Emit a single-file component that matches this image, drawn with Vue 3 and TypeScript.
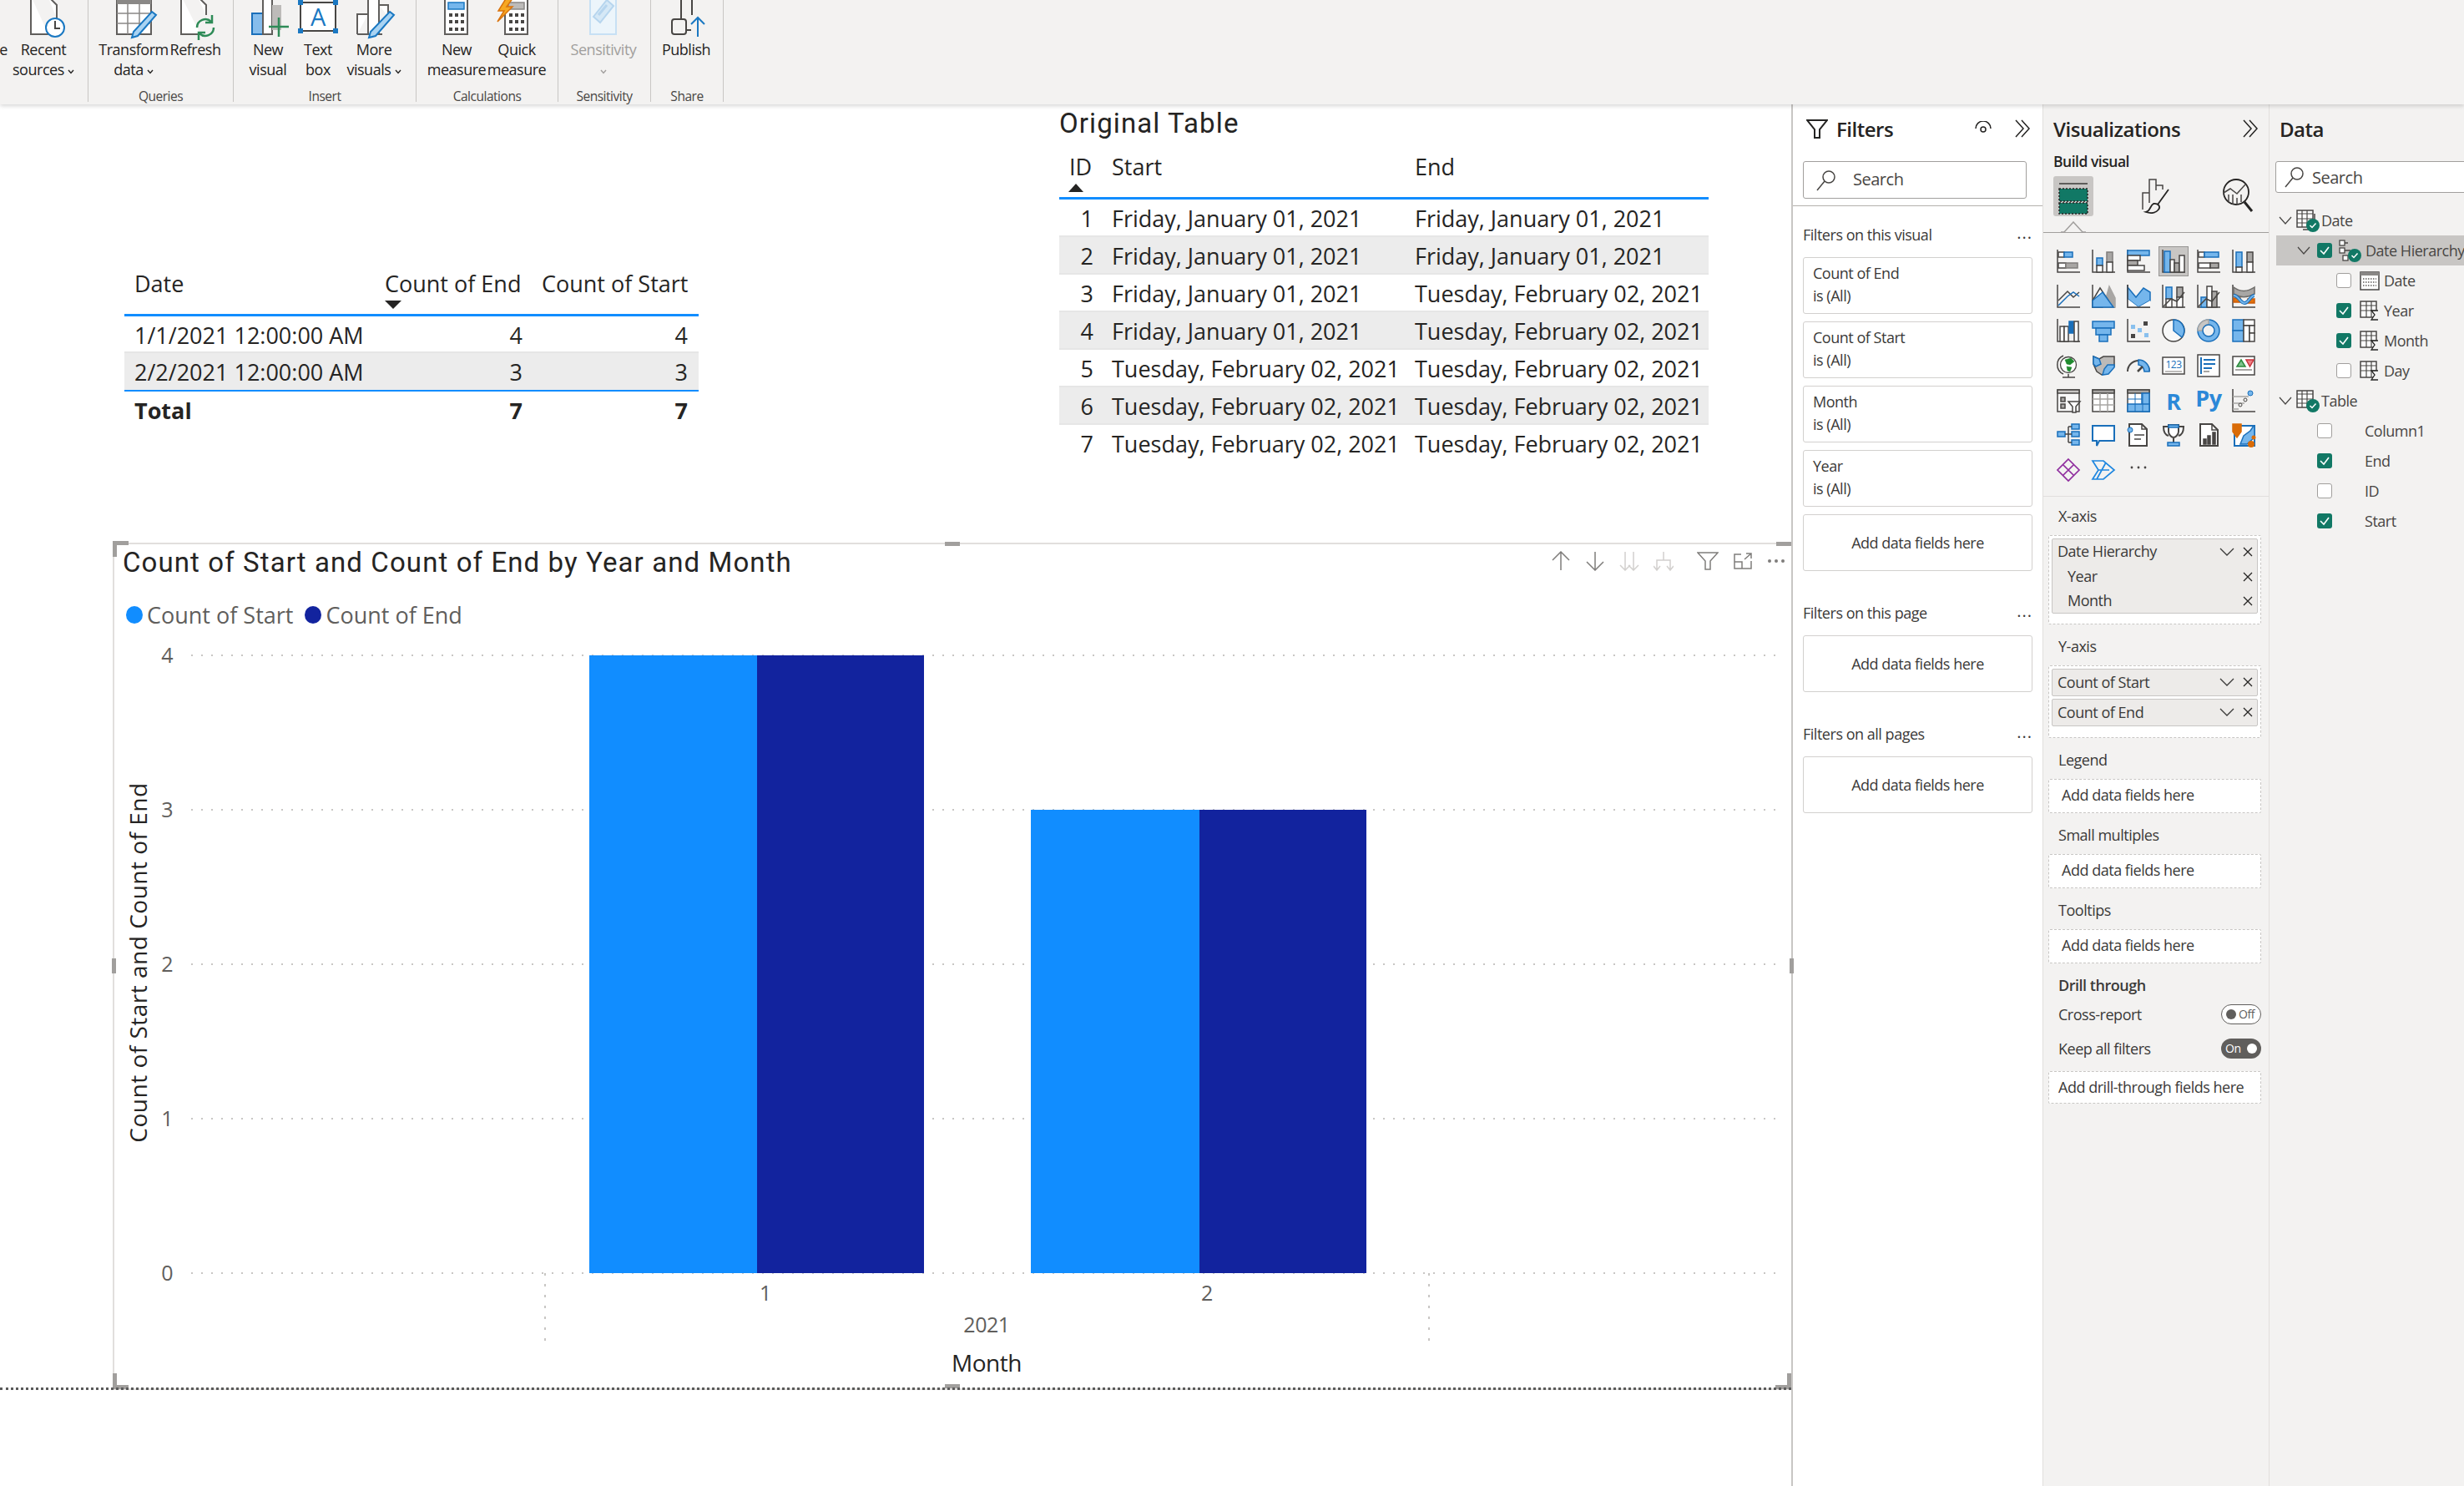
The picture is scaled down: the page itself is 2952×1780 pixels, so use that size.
<script setup lang="ts">
const D = "#484644";
const B = "#1a6fba";
const L = "#75b6ec";
const G = "#a8a6a4";
const W = "#ffffff";
const P = "#f3f2f1";

function r(x: number, y: number, w: number, h: number, f = W, s = D) {
    return `<rect x="${x}" y="${y}" width="${w}" height="${h}" fill="${f}" stroke="${s}" stroke-width="1.5"/>`;
}
function p(d: string, f = "none", s = D, w = 1.5) {
    return `<path d="${d}" fill="${f}" stroke="${s}" stroke-width="${w}"/>`;
}
const ax = p("M1 0V27H28");
const cell = (x: number, y: number, f: string) => `<rect x="${x}" y="${y}" width="5" height="5" fill="${f}"/>`;

const vizIcons: string[] = [
    ax + r(2, 3, 7, 6) + r(9, 3, 10, 6, L, B) + r(2, 16, 9, 6) + r(11, 16, 14, 6, G, "#807e7c"),
    ax + r(6, 10, 7, 9, L, B) + r(6, 19, 7, 8) + r(18, 3, 7, 12, G, "#807e7c") + r(18, 15, 7, 12),
    ax + r(1, 1, 26, 6, L, B) + r(1, 7, 15, 6) + r(1, 13, 12, 6, G) + r(1, 19, 20, 6),
    ax + r(3, 2, 7, 25, L, B) + r(10, 12, 5, 15) + r(15, 16, 6, 11, G) + r(21, 7, 6, 20),
    ax + r(2, 3, 7, 6) + r(9, 3, 17, 6, L, B) + r(2, 16, 14, 6) + r(16, 16, 10, 6, G),
    ax + r(5, 3, 7, 18, L, B) + r(5, 21, 7, 6) + r(18, 3, 7, 12, G) + r(18, 15, 7, 12),
    ax + p("M2 19L13 8L20 15L27 9") + p("M2 25L13 14L20 9L27 14", "none", B),
    ax + p("M14 27L21 2L28 16V27Z", G, G) + p("M1 19L10 4L20 19L13 27H1Z", W) + p("M1 27V19L13 9L26 27Z", L, B),
    ax + p("M1 3L11 15L20 4L28 9V19L14 27L1 17Z", L, B) + p("M1 17L14 27H1ZM28 19L14 27H28Z", W, W, 0) + ax,
    ax + r(5, 3, 7, 14, L, B) + r(5, 17, 7, 10) + r(18, 3, 7, 12, G) + r(18, 15, 7, 12) + p("M2 26L11 17L18 20L27 9"),
    ax + r(5, 15, 7, 12, L, B) + r(12, 2, 6, 25) + r(18, 8, 6, 19, G) + p("M2 26L11 17L18 20L27 9"),
    ax + p("M2 3C10 9 18 9 27 3V11C18 16 10 16 2 11Z", G, "#6d6b69") + r(2, 16, 8, 5, "#e3710b", "#ca5b0a") + r(19, 17, 8, 5, "#e3710b", "#ca5b0a") + p("M2 13C8 13 10 22 15 22C20 22 22 13 27 13", "none", B, 4) + p("M2 13C8 13 10 22 15 22C20 22 22 13 27 13", "none", L, 2),
    ax + r(4, 9, 5, 18) + r(9, 9, 5, 18) + r(15, 3, 5, 14, B, B) + r(21, 3, 5, 24),
    r(1, 3, 26, 8, L, B) + r(5, 11, 18, 8, L, B) + r(9, 19, 10, 8, L, B),
    ax + cell(20, 3, D) + cell(5, 7, "#89c0ee") + cell(13, 11, "#89c0ee") + cell(5, 18, D) + cell(21, 17, "#89c0ee"),
    `<circle cx="14" cy="14" r="13" fill="#f8f8f8" stroke="${D}" stroke-width="1.5"/>` + p("M14 14V1A13 13 0 0 1 24 22Z", L, B),
    `<circle cx="14" cy="14" r="13" fill="${L}" stroke="${B}" stroke-width="1.5"/>` + p("M14 1A13 13 0 0 0 1 14H7A7 7 0 0 1 14 7Z", "#c8c6c4", G) + `<circle cx="14" cy="14" r="7" fill="${P}" stroke="${B}" stroke-width="1.5"/>`,
    r(1, 1, 13, 13, L, B) + r(1, 14, 13, 13, L, B) + r(14, 1, 13, 7) + r(14, 8, 7, 19) + r(21, 8, 6, 9) + r(21, 17, 6, 10),
    `<circle cx="14" cy="13" r="9.5" fill="#fff" stroke="${D}" stroke-width="1.3"/>` + p("M8 2A12 12 0 0 0 8 24M7 28H22M14 24V28", "none", D) + p("M10 7L17 5L21 9L16 13L12 12ZM12 15L18 16L16 21L13 20Z", "#1f8a2e", "#1f8a2e", 0.5),
    p("M2 3L9 6L14 3H27V15L19 22L12 25L6 21L2 12Z", "#bcbab8", D) + p("M2 3L9 6L11 12L5 15L2 12Z", L, B) + p("M19 13H27V16L20 24L13 25L15 18Z", L, B),
    p("M1 21A13 13 0 0 1 27 21", "none", D, 2) + p("M14 7A13 13 0 0 1 27 21H21A8 8 0 0 0 14 13Z", L, B) + p("M13 21L19 15", "none", D, 2.5),
    r(1, 4, 26, 20) + `<text x="14" y="17" text-anchor="middle" font-size="12" fill="${B}" font-family="Open Sans, sans-serif">123</text>` + p("M4 21H24", "none", G),
    r(1, 1, 26, 26) + p("M5 4V24M8 7H22M8 12H22M8 17H18", "none", B, 2) + p("M8 21H15", "none", G, 2),
    r(1, 3, 26, 22) + p("M6 15L11 7L16 15Z", "#7fc48f", "#2d8a3e") + p("M17 7H26L21.5 15Z", "#ef7f85", "#c7333c") + p("M4 19H24", "none", G, 2),
    r(1, 1, 26, 26, "#f8f8f8") + r(1, 1, 26, 4, "#c8c6c4") + r(5, 10, 5, 5, G) + r(5, 18, 5, 5, G) + p("M14 15H28L23 21V28H19V21Z", W),
    r(1, 1, 26, 26) + r(1, 1, 26, 4, G) + p("M1 12H27M1 19H27M10 5V27M19 5V27", "none", G, 1.5),
    r(1, 1, 26, 26) + r(1, 1, 26, 4, G) + r(18, 5, 9, 22, L, B) + r(1, 18, 26, 9, L, B) + p("M1 12H18M10 5V27M19 5V27", "none", B, 1),
    `<text x="14" y="25" text-anchor="middle" font-size="27" font-weight="700" fill="#2b88d8" font-family="Open Sans, sans-serif">R</text>`,
    `<text x="14" y="21" text-anchor="middle" font-size="27" font-weight="700" fill="#2b88d8" font-family="Open Sans, sans-serif">Py</text>`,
    p("M1 0V27H28") + p("M1 9H20M1 17H15M1 24H8", "none", G) + `<circle cx="22" cy="5" r="3" fill="${L}" stroke="${B}"/><circle cx="16" cy="13" r="2" fill="${P}" stroke="${D}"/><circle cx="10" cy="19" r="2" fill="${P}" stroke="${D}"/>`,
    r(1, 10, 9, 6, L, B) + r(18, 1, 9, 6, L, B) + r(18, 10, 9, 6, L, B) + r(18, 20, 9, 6, L, B) + p("M10 13H18M14 4V23M14 4H18M14 23H18", "none", D),
    p("M1 3H27V21H9L6 27V21H1Z", W, B, 2),
    p("M3 1H18L24 7V27H3Z", W, D, 2) + p("M18 1V7H24M9 14H21M9 19H17", "none", D) + `<circle cx="4" cy="8" r="3" fill="${L}" stroke="${B}"/>`,
    p("M7 4H2C2 10 4 14 8 15M21 4H26C26 10 24 14 20 15M8 2H20V10C20 14 16 17 14 17C12 17 8 14 8 10ZM14 17V23", W, D, 2) + r(8, 2, 12, 3, L, B) + r(7, 23, 14, 4, L, B),
    p("M4 1H18L25 8V27H4Z", W, D, 2) + p("M18 1V8H25", "none", D) + r(8, 19, 3, 6, D) + r(13, 15, 3, 10, D) + r(19, 11, 3, 14, D),
    p("M3 3H27V27H3Z", W, B, 2) + p("M10 25L14 15L22 9L26 3H27V17L18 25Z", L, B) + p("M1 1H11V10L6 17L1 10Z", "#d96b07", "#d96b07") + `<circle cx="26" cy="17" r="2.5" fill="#d96b07"/><circle cx="23" cy="25" r="4" fill="#d96b07"/>`,
    p("M14 1L27 14L14 27L1 14ZM14 1L7.5 7.5L20.5 20.5M14 1L20.5 7.5L7.5 20.5", "none", "#8f2d9e", 1.7),
    p("M1 3H14L27 14L14 25H1L8 14ZM8 14L21 14M17 5L6 25", "none", "#1f87e0", 1.7),
    `<circle cx="6" cy="11" r="1.4" fill="${D}"/><circle cx="14" cy="11" r="1.4" fill="${D}"/><circle cx="22" cy="11" r="1.4" fill="${D}"/>`,
];
const selectedViz = 3;

const ribbon = [
    {
        label: "",
        width: 106,
        pad: 0,
        buttons: [
            { key: "none", lines: ["e"], w: 10, chevron: false, muted: false },
            { key: "recent", lines: ["Recent", "sources"], w: 84, chevron: true, muted: false },
        ],
    },
    {
        label: "Queries",
        width: 174,
        pad: 12,
        buttons: [
            { key: "transform", lines: ["Transform", "data"], w: 84, chevron: true, muted: false },
            { key: "refresh", lines: ["Refresh"], w: 64, chevron: false, muted: false },
        ],
    },
    {
        label: "Insert",
        width: 219,
        pad: 13,
        buttons: [
            { key: "newvisual", lines: ["New", "visual"], w: 56, chevron: false, muted: false },
            { key: "textbox", lines: ["Text", "box"], w: 64, chevron: false, muted: false },
            { key: "more", lines: ["More", "visuals"], w: 70, chevron: true, muted: false },
        ],
    },
    {
        label: "Calculations",
        width: 170,
        pad: 6,
        buttons: [
            { key: "measure", lines: ["New", "measure"], w: 84, chevron: false, muted: false },
            { key: "quick", lines: ["Quick", "measure"], w: 60, chevron: false, muted: false },
        ],
    },
    {
        label: "Sensitivity",
        width: 111,
        pad: 4,
        buttons: [{ key: "sens", lines: ["Sensitivity"], w: 100, chevron: true, muted: true }],
    },
    {
        label: "Share",
        width: 87,
        pad: 0,
        buttons: [{ key: "publish", lines: ["Publish"], w: 84, chevron: false, muted: false }],
    },
];

const summaryRows = [
    { date: "1/1/2021 12:00:00 AM", end: 4, start: 4 },
    { date: "2/2/2021 12:00:00 AM", end: 3, start: 3 },
];

const jan = "Friday, January 01, 2021";
const feb = "Tuesday, February 02, 2021";
const originalRows = [
    [1, jan, jan],
    [2, jan, jan],
    [3, jan, feb],
    [4, jan, feb],
    [5, feb, feb],
    [6, feb, feb],
    [7, feb, feb],
];

// plot coordinates, relative to the svg under the legend
const zeroY = 756;
const unit = 185;
const gridValues = [0, 1, 2, 3, 4];
const bars = [
    { x: 569, w: 201, v: 4, fill: "#118dff" },
    { x: 770, w: 200, v: 4, fill: "#12239e" },
    { x: 1098, w: 202, v: 3, fill: "#118dff" },
    { x: 1300, w: 200, v: 3, fill: "#12239e" },
];

const filterCards = ["Count of End", "Count of Start", "Month", "Year"];

const xAxisFields = ["Year", "Month"];
const yAxisFields = ["Count of Start", "Count of End"];
const emptyBuckets = ["Legend", "Small multiples", "Tooltips"];

const tree = [
    { kind: "top", icon: "stack", label: "Date", checked: false },
    { kind: "hier", icon: "hier", label: "Date Hierarchy", checked: true },
    { kind: "nested", icon: "cal", label: "Date", checked: false },
    { kind: "nested", icon: "sum", label: "Year", checked: true },
    { kind: "nested", icon: "sum", label: "Month", checked: true },
    { kind: "nested", icon: "sum", label: "Day", checked: false },
    { kind: "top", icon: "table", label: "Table", checked: false },
    { kind: "field", icon: "", label: "Column1", checked: false },
    { kind: "field", icon: "", label: "End", checked: true },
    { kind: "field", icon: "", label: "ID", checked: false },
    { kind: "field", icon: "", label: "Start", checked: true },
];
</script>

<template>
    <div class="app">
        <header class="ribbon">
            <section
                v-for="group in ribbon"
                :key="group.label"
                class="group"
                :style="{ width: group.width + 'px' }"
            >
                <div class="group-buttons" :style="{ paddingLeft: group.pad + 'px' }">
                    <div
                        v-for="btn in group.buttons"
                        :key="btn.key"
                        class="rb"
                        :class="{ muted: btn.muted }"
                        :style="{ width: btn.w + 'px' }"
                    >
                        <svg class="rb-icon" viewBox="0 0 48 44" width="48" height="44">
                            <template v-if="btn.key === 'recent'">
                                <path d="M9 -5V41H30M29 -5L40 6V22" fill="#fff" stroke="#605e5c" stroke-width="2" />
                                <circle cx="38" cy="33" r="11" fill="#fff" stroke="#1a78c2" stroke-width="2" />
                                <path d="M38 25V34H44" fill="none" stroke="#484644" stroke-width="2" />
                            </template>
                            <template v-else-if="btn.key === 'transform'">
                                <rect x="4" y="-6" width="41" height="47" fill="#fff" stroke="#605e5c" stroke-width="2" />
                                <rect x="4" y="-6" width="41" height="11" fill="#8a8886" />
                                <path d="M4 16H45M4 28H45M17 5V41M31 5V41" stroke="#8a8886" stroke-width="1.5" />
                                <path d="M46 14L51 18L29 43L22 45L24 38Z" fill="#a9d3f2" stroke="#1a78c2" stroke-width="2" />
                            </template>
                            <template v-else-if="btn.key === 'refresh'">
                                <path d="M7 -5V41H30M26 -5L37 6V18" fill="#fff" stroke="#605e5c" stroke-width="2" />
                                <path d="M26 33A10 10 0 0 1 43 26M46 33A10 10 0 0 1 29 40" fill="none" stroke="#2e8b57" stroke-width="2.5" />
                                <path d="M44 18V27H36M28 48V39H36" fill="none" stroke="#2e8b57" stroke-width="2.5" />
                            </template>
                            <template v-else-if="btn.key === 'newvisual'">
                                <rect x="5" y="16" width="13" height="25" fill="#86bdec" stroke="#1a6fba" stroke-width="2" />
                                <rect x="18" y="-4" width="11" height="45" fill="#fff" stroke="#605e5c" stroke-width="2" />
                                <rect x="29" y="6" width="11" height="30" fill="#bdbbb9" />
                                <path d="M37 21V44M25 32H49" stroke="#2e8b57" stroke-width="2.5" />
                            </template>
                            <template v-else-if="btn.key === 'textbox'">
                                <rect x="3" y="3" width="42" height="34" fill="#fff" stroke="#484644" stroke-width="2" />
                                <rect x="0" y="0" width="6" height="6" fill="#1a78c2" />
                                <rect x="42" y="0" width="6" height="6" fill="#1a78c2" />
                                <rect x="0" y="34" width="6" height="6" fill="#1a78c2" />
                                <rect x="42" y="34" width="6" height="6" fill="#1a78c2" />
                                <text x="24" y="31" text-anchor="middle" font-size="29" fill="#1a78c2" font-family="Open Sans, sans-serif">A</text>
                            </template>
                            <template v-else-if="btn.key === 'more'">
                                <path d="M4 41V17H17M17 41V-4H30V41M30 6H41V20M4 41H34" fill="#fff" stroke="#605e5c" stroke-width="2" />
                                <path d="M43 14L48 18L26 43L18 45L20 38Z" fill="#a9d3f2" stroke="#1a78c2" stroke-width="2" />
                            </template>
                            <template v-else-if="btn.key === 'measure' || btn.key === 'quick'">
                                <rect x="10" y="-4" width="27" height="45" fill="#fff" stroke="#605e5c" stroke-width="2" />
                                <rect x="14" y="3" width="19" height="8" :fill="btn.key === 'quick' ? '#bdbbb9' : '#75b6ec'" :stroke="btn.key === 'quick' ? '#8a8886' : '#1a78c2'" stroke-width="1.5" />
                                <path d="M15 18H33M15 26H33M15 35H33" stroke="#484644" stroke-width="4" stroke-dasharray="4 3" />
                                <path v-if="btn.key === 'quick'" d="M12 -3L2 13H9L1 26L19 8H12L20 -3Z" fill="#f7a823" stroke="#d9730d" stroke-width="1.5" />
                            </template>
                            <template v-else-if="btn.key === 'sens'">
                                <path d="M8 -5V41H39V-5" fill="#ecf5fb" stroke="#c7e0f4" stroke-width="2" />
                                <path d="M12 20L28 0L36 7L20 27Z" fill="#d5e8f6" stroke="#b6d5ee" stroke-width="2" />
                                <path d="M18 18L28 6" stroke="#b6d5ee" stroke-width="3" />
                            </template>
                            <template v-else-if="btn.key === 'publish'">
                                <rect x="7" y="23" width="17" height="18" rx="3" fill="none" stroke="#484644" stroke-width="2" />
                                <path d="M24 36H30M18 23V-4H31V18" fill="none" stroke="#484644" stroke-width="2" />
                                <path d="M38 44V21M30 29L38 21L46 29" fill="none" stroke="#1a78c2" stroke-width="2" />
                            </template>
                        </svg>
                        <div v-for="(line, i) in btn.lines" :key="i" class="rb-line" :class="{ plain: btn.key === 'none' }">
                            {{ line }}
                            <svg v-if="btn.chevron && i === btn.lines.length - 1 && btn.lines.length > 1" class="mini-chev" viewBox="0 0 8 6" width="8" height="6">
                                <path d="M1 1L4 4.5L7 1" fill="none" stroke="currentColor" stroke-width="1.4" />
                            </svg>
                        </div>
                        <div v-if="btn.muted" class="rb-line">
                            <svg class="mini-chev" viewBox="0 0 8 6" width="8" height="6">
                                <path d="M1 1L4 4.5L7 1" fill="none" stroke="currentColor" stroke-width="1.4" />
                            </svg>
                        </div>
                    </div>
                </div>
                <div class="group-label">{{ group.label }}</div>
            </section>
        </header>

        <main class="body">
            <div class="canvas">
                <!-- summary table -->
                <div class="visual summary">
                    <div class="s-row s-head">
                        <div class="s-date">Date</div>
                        <div class="s-end">
                            Count of End
                            <i class="sort down"></i>
                        </div>
                        <div class="s-start">Count of Start</div>
                    </div>
                    <div
                        v-for="(row, i) in summaryRows"
                        :key="row.date"
                        class="s-row s-body"
                        :class="{ alt: i === 1 }"
                    >
                        <div class="s-date">{{ row.date }}</div>
                        <div class="num">{{ row.end }}</div>
                        <div class="num">{{ row.start }}</div>
                    </div>
                    <div class="s-row s-total">
                        <div class="s-date">Total</div>
                        <div class="num">7</div>
                        <div class="num">7</div>
                    </div>
                </div>

                <!-- original table -->
                <div class="visual original">
                    <div class="din o-title">Original Table</div>
                    <div class="o-row o-head">
                        <div class="o-id-head">
                            ID
                            <i class="sort up"></i>
                        </div>
                        <div class="o-start">Start</div>
                        <div class="o-end">End</div>
                    </div>
                    <div
                        v-for="(row, i) in originalRows"
                        :key="row[0]"
                        class="o-row o-body"
                        :class="{ alt: i % 2 === 1, last: i === originalRows.length - 1 }"
                    >
                        <div class="o-id">{{ row[0] }}</div>
                        <div class="o-start">{{ row[1] }}</div>
                        <div class="o-end">{{ row[2] }}</div>
                    </div>
                </div>

                <!-- column chart -->
                <div class="visual chart">
                    <div class="din c-title">Count of Start and Count of End by Year and Month</div>
                    <div class="legend">
                        <span class="dot light"></span><span class="leg-text">Count of Start</span>
                        <span class="dot dark"></span><span class="leg-text">Count of End</span>
                    </div>
                    <svg class="plot" viewBox="0 0 2009 890" width="2009" height="890">
                        <line
                            v-for="g in gridValues"
                            :key="g"
                            x1="92"
                            x2="1992"
                            :y1="zeroY - g * unit"
                            :y2="zeroY - g * unit"
                            stroke="#c8c6c4"
                            stroke-width="2"
                            stroke-dasharray="2 10"
                        />
                        <line x1="516" x2="516" y1="756" y2="838" stroke="#c8c6c4" stroke-width="2" stroke-dasharray="3 10" />
                        <line x1="1575" x2="1575" y1="756" y2="838" stroke="#c8c6c4" stroke-width="2" stroke-dasharray="3 10" />
                        <rect
                            v-for="b in bars"
                            :key="b.x"
                            :x="b.x"
                            :y="zeroY - b.v * unit"
                            :width="b.w"
                            :height="b.v * unit"
                            :fill="b.fill"
                        />
                        <text
                            v-for="g in gridValues"
                            :key="'t' + g"
                            x="70"
                            :y="zeroY - g * unit + 9"
                            text-anchor="end"
                            class="tick"
                        >{{ g }}</text>
                        <text x="780" y="789" text-anchor="middle" class="tick">1</text>
                        <text x="1309" y="789" text-anchor="middle" class="tick">2</text>
                        <text x="1045" y="827" text-anchor="middle" class="tick">2021</text>
                        <text x="1045" y="874" text-anchor="middle" class="axis-title">Month</text>
                        <text
                            x="0"
                            y="0"
                            transform="translate(39 384) rotate(-90)"
                            text-anchor="middle"
                            class="axis-title wide"
                        >Count of Start and Count of End</text>
                    </svg>

                    <div class="toolbar">
                        <svg viewBox="0 0 24 24" width="24" height="24"><path d="M12 23V1M2 11L12 1L22 11" fill="none" stroke="#7f7d7b" stroke-width="1.5" /></svg>
                        <svg viewBox="0 0 24 24" width="24" height="24"><path d="M12 1V23M2 13L12 23L22 13" fill="none" stroke="#7f7d7b" stroke-width="1.5" /></svg>
                        <svg viewBox="0 0 24 24" width="24" height="24"><path d="M7 1V23M1 17L7 23L13 17M17 1V23M11 17L17 23L23 17" fill="none" stroke="#d2d0ce" stroke-width="1.5" /></svg>
                        <svg viewBox="0 0 24 24" width="24" height="24"><path d="M12 1V11M4 23V11H20V23M0 18L4 23L8 18M16 18L20 23L24 18" fill="none" stroke="#d2d0ce" stroke-width="1.5" /></svg>
                        <svg class="gap" viewBox="0 0 26 22" width="26" height="22"><path d="M1 1H25L16 11V21H10V11Z" fill="none" stroke="#7f7d7b" stroke-width="1.5" /></svg>
                        <svg viewBox="0 0 24 22" width="24" height="22"><path d="M10 3H2V20H22V11M2 12H11V20M14 9L22 2M16 2H22V8" fill="none" stroke="#7f7d7b" stroke-width="1.5" /></svg>
                        <span class="tool-dots"></span>
                    </div>

                    <i class="handle corner tl"></i>
                    <i class="handle corner bl"></i>
                    <i class="handle corner br"></i>
                    <i class="handle hz tm"></i>
                    <i class="handle hz bm"></i>
                    <i class="handle hz tr"></i>
                    <i class="handle vt lm"></i>
                    <i class="handle vt rm"></i>
                </div>
                <div class="focus-line"></div>
            </div>

            <aside class="filters">
                <div class="pane-head">
                    <svg class="funnel" viewBox="0 0 26 24" width="26" height="24">
                        <path d="M1 2H25L16 13V23H10V13Z" fill="none" stroke="#252423" stroke-width="2" />
                    </svg>
                    <span class="pane-title">Filters</span>
                    <svg class="eye" viewBox="0 0 20 18" width="20" height="18">
                        <path d="M1 9A9 9 0 0 1 19 9" fill="none" stroke="#252423" stroke-width="1.5" />
                        <circle cx="10" cy="10" r="3" fill="none" stroke="#252423" stroke-width="1.5" />
                    </svg>
                    <svg class="dbl" viewBox="0 0 20 22" width="20" height="22">
                        <path d="M2 1L11 11L2 21M9 1L18 11L9 21" fill="none" stroke="#252423" stroke-width="1.5" />
                    </svg>
                </div>
                <div class="search f-search">
                    <svg viewBox="0 0 24 26" width="24" height="26">
                        <circle cx="15" cy="9" r="7" fill="none" stroke="#484644" stroke-width="1.5" />
                        <path d="M10 14L1 25" stroke="#484644" stroke-width="1.5" />
                    </svg>
                    <span>Search</span>
                </div>
                <div class="f-rule"></div>
                <div class="f-section first">
                    <span>Filters on this visual</span><b class="more">...</b>
                </div>
                <div class="f-cards">
                    <div v-for="c in filterCards" :key="c" class="f-card">
                        <div>{{ c }}</div>
                        <div>is (All)</div>
                    </div>
                    <div class="f-add">Add data fields here</div>
                </div>
                <div class="f-section">
                    <span>Filters on this page</span><b class="more">...</b>
                </div>
                <div class="f-add">Add data fields here</div>
                <div class="f-section">
                    <span>Filters on all pages</span><b class="more">...</b>
                </div>
                <div class="f-add">Add data fields here</div>
            </aside>

            <aside class="viz">
                <div class="pane-head viz-head">
                    <span class="pane-title">Visualizations</span>
                    <svg class="dbl" viewBox="0 0 20 22" width="20" height="22">
                        <path d="M2 1L11 11L2 21M9 1L18 11L9 21" fill="none" stroke="#252423" stroke-width="1.5" />
                    </svg>
                </div>
                <div class="build">Build visual</div>
                <div class="tabs">
                    <div class="tab on">
                        <svg viewBox="0 0 48 48" width="48" height="48">
                            <path d="M7 9H41" stroke="#3b3a39" stroke-width="1.5" />
                            <rect x="7" y="15" width="34" height="15" fill="#117865" stroke="#252423" stroke-width="1.5" stroke-dasharray="2 2" />
                            <rect x="7" y="32" width="34" height="13" fill="#117865" stroke="#252423" stroke-width="1.5" stroke-dasharray="2 2" />
                        </svg>
                    </div>
                    <div class="tab brush">
                        <svg viewBox="0 0 36 44" width="36" height="44">
                            <path d="M2 38V18H10M10 30V2H18V15M18 9H26V14" fill="none" stroke="#484644" stroke-width="1.5" />
                            <path d="M33 14L20 32M15 31C20 30 24 34 21 38C18 42 12 43 6 41C11 40 11 33 15 31Z" fill="none" stroke="#252423" stroke-width="1.8" />
                        </svg>
                    </div>
                    <div class="tab scope">
                        <svg viewBox="0 0 38 44" width="38" height="44">
                            <circle cx="17" cy="17" r="15" fill="none" stroke="#252423" stroke-width="1.8" />
                            <path d="M27 29L36 40" stroke="#252423" stroke-width="3" />
                            <path d="M2 18L10 13L18 19L28 8M8 20V30M13 20V32M18 24V32M23 20V29" fill="none" stroke="#484644" stroke-width="1.5" />
                        </svg>
                    </div>
                    <svg class="notch" viewBox="0 0 30 14" width="30" height="14">
                        <path d="M0 13H4L15 1L26 13H30" fill="#f3f2f1" stroke="#a19f9d" stroke-width="1.5" />
                    </svg>
                </div>
                <div class="viz-grid">
                    <div v-for="(icon, i) in vizIcons" :key="i" class="viz-cell" :class="{ picked: i === selectedViz }">
                        <svg viewBox="0 0 28 28" width="28" height="28" v-html="icon"></svg>
                    </div>
                </div>
                <div class="viz-rule"></div>

                <div class="bk-label bk-first">X-axis</div>
                <div class="well">
                    <div class="pill stack">
                        <div class="pill-row">
                            <span>Date Hierarchy</span>
                            <svg class="x-chev" viewBox="0 0 18 10" width="18" height="10"><path d="M1 1L9 9L17 1" fill="none" stroke="#3b3a39" stroke-width="1.3" /></svg>
                            <svg class="x-x" viewBox="0 0 12 12" width="12" height="12"><path d="M1 1L11 11M11 1L1 11" stroke="#252423" stroke-width="1.3" /></svg>
                        </div>
                        <div v-for="f in xAxisFields" :key="f" class="pill-row sub">
                            <span>{{ f }}</span>
                            <svg class="x-x" viewBox="0 0 12 12" width="12" height="12"><path d="M1 1L11 11M11 1L1 11" stroke="#252423" stroke-width="1.3" /></svg>
                        </div>
                    </div>
                </div>

                <div class="bk-label">Y-axis</div>
                <div class="well y-well">
                    <div v-for="f in yAxisFields" :key="f" class="pill single">
                        <span>{{ f }}</span>
                        <svg class="x-chev" viewBox="0 0 18 10" width="18" height="10"><path d="M1 1L9 9L17 1" fill="none" stroke="#3b3a39" stroke-width="1.3" /></svg>
                        <svg class="x-x" viewBox="0 0 12 12" width="12" height="12"><path d="M1 1L11 11M11 1L1 11" stroke="#252423" stroke-width="1.3" /></svg>
                    </div>
                </div>

                <template v-for="b in emptyBuckets" :key="b">
                    <div class="bk-label">{{ b }}</div>
                    <div class="well empty">Add data fields here</div>
                </template>

                <div class="bk-label drill">Drill through</div>
                <div class="toggle-row">
                    <span>Cross-report</span>
                    <div class="toggle off"><i></i><em>Off</em></div>
                </div>
                <div class="toggle-row second">
                    <span>Keep all filters</span>
                    <div class="toggle on"><em>On</em><i></i></div>
                </div>
                <div class="well empty drill-well">Add drill-through fields here</div>
            </aside>

            <aside class="data">
                <div class="pane-head">
                    <span class="pane-title">Data</span>
                </div>
                <div class="search d-search">
                    <svg viewBox="0 0 24 26" width="24" height="26">
                        <circle cx="15" cy="9" r="7" fill="none" stroke="#484644" stroke-width="1.5" />
                        <path d="M10 14L1 25" stroke="#484644" stroke-width="1.5" />
                    </svg>
                    <span>Search</span>
                </div>
                <div class="tree">
                    <div v-for="(row, i) in tree" :key="i" class="t-row" :class="'k-' + row.kind">
                        <svg v-if="row.kind === 'top' || row.kind === 'hier'" class="t-chev" viewBox="0 0 16 10" width="16" height="10">
                            <path d="M1 1L8 9L15 1" fill="none" stroke="#484644" stroke-width="1.2" />
                        </svg>
                        <span v-if="row.kind !== 'top'" class="check" :class="{ on: row.checked }">
                            <svg v-if="row.checked" viewBox="0 0 18 18" width="18" height="18">
                                <path d="M4 9L8 13L14 5" fill="none" stroke="#fff" stroke-width="1.6" />
                            </svg>
                        </span>
                        <span v-if="row.icon" class="t-icon">
                            <svg viewBox="0 0 24 26" width="24" height="26">
                                <template v-if="row.icon === 'stack' || row.icon === 'table'">
                                    <rect x="1" y="1" width="19" height="20" fill="#fff" stroke="#484644" stroke-width="1.5" />
                                    <path d="M1 5H20M1 11H20M1 16H20M7 1V21M13 1V21" stroke="#484644" stroke-width="1.2" />
                                    <path v-if="row.icon === 'stack'" d="M22 5V24H8" fill="none" stroke="#484644" stroke-width="1.5" />
                                </template>
                                <template v-else-if="row.icon === 'hier'">
                                    <rect x="2" y="1" width="6" height="6" fill="#fff" stroke="#484644" stroke-width="1.3" />
                                    <rect x="2" y="10" width="6" height="6" fill="#fff" stroke="#484644" stroke-width="1.3" />
                                    <rect x="6" y="19" width="6" height="6" fill="#fff" stroke="#484644" stroke-width="1.3" />
                                    <path d="M8 4H12M8 13H15" stroke="#484644" stroke-width="1.3" />
                                </template>
                                <template v-else-if="row.icon === 'cal'">
                                    <rect x="1" y="3" width="22" height="21" fill="#fff" stroke="#484644" stroke-width="1.5" />
                                    <rect x="1" y="3" width="22" height="4" fill="#8a8886" />
                                    <path d="M4 11H20M4 15H20M4 19H20" stroke="#605e5c" stroke-width="1.5" stroke-dasharray="1.5 1.5" />
                                </template>
                                <template v-else>
                                    <rect x="1" y="2" width="19" height="19" fill="#fff" stroke="#484644" stroke-width="1.5" />
                                    <path d="M1 7H20M1 13H20M8 2V21M14 2V21" stroke="#484644" stroke-width="1.2" />
                                    <path d="M22 13H14L18 18L14 24H22" fill="#f3f2f1" stroke="#252423" stroke-width="1.3" />
                                </template>
                            </svg>
                            <span v-if="row.icon === 'stack' || row.icon === 'table' || row.icon === 'hier'" class="badge">
                                <svg viewBox="0 0 16 16" width="16" height="16">
                                    <circle cx="8" cy="8" r="8" fill="#117865" />
                                    <path d="M4.5 8L7 10.5L11.5 5.5" fill="none" stroke="#fff" stroke-width="1.5" />
                                </svg>
                            </span>
                        </span>
                        <span class="t-label">{{ row.label }}</span>
                    </div>
                </div>
            </aside>
        </main>
    </div>
</template>

<style>
html,
body {
    margin: 0;
    background: #fff;
}
</style>

<style scoped>
.app {
    --seg: "Open Sans", "Noto Sans", sans-serif;
    width: 2952px;
    height: 1780px;
    overflow: hidden;
    display: flex;
    flex-direction: column;
    font-family: var(--seg);
    color: #252423;
    letter-spacing: -0.03em;
}
.ribbon {
    position: relative;
    z-index: 2;
    height: 125px;
    flex: none;
    display: flex;
    background: #f3f2f1;
    box-shadow: 0 2px 5px rgba(0, 0, 0, 0.16);
}
.group {
    box-sizing: border-box;
    height: 122px;
    border-right: 1px solid #c8c6c4;
    display: flex;
    flex-direction: column;
}
.group-buttons {
    flex: none;
    height: 104px;
    display: flex;
}
.group-label {
    flex: none;
    height: 22px;
    line-height: 22px;
    text-align: center;
    font-size: 15.5px;
    color: #484644;
}
.rb {
    flex: none;
    display: flex;
    flex-direction: column;
    align-items: center;
    font-size: 18px;
    line-height: 24px;
    white-space: nowrap;
}
.rb.muted {
    color: #a19f9d;
}
.rb-icon {
    flex: none;
    overflow: visible;
    margin-bottom: 3px;
}
.rb-line {
    height: 24px;
}
.rb-line.plain {
    margin-left: -2px;
}
.mini-chev {
    vertical-align: 1px;
}
.body {
    flex: 1;
    display: flex;
    min-height: 0;
}
.canvas {
    position: relative;
    width: 2146px;
    flex: none;
    background: #fff;
}
.visual {
    position: absolute;
    box-sizing: border-box;
}
.din {
    font-family: Roboto, var(--seg);
    letter-spacing: 1.1px;
}

.summary {
    left: 149px;
    top: 195px;
    width: 688px;
    font-size: 27px;
    letter-spacing: 0;
}
.s-row {
    display: grid;
    grid-template-columns: 303px 187px 198px;
}
.s-head {
    height: 59px;
    line-height: 40px;
    border-bottom: 3px solid #118dff;
    box-sizing: border-box;
}
.s-date {
    padding-left: 12px;
}
.s-end {
    position: relative;
    padding-left: 9px;
    white-space: nowrap;
}
.s-start {
    padding-left: 10px;
    white-space: nowrap;
}
.s-body {
    box-sizing: border-box;
    height: 44px;
    line-height: 46px;
    border-bottom: 2px solid #e6e6e6;
}
.s-body.alt {
    background: #ececec;
    border-bottom: 2px solid #118dff;
    height: 46px;
}
.num {
    text-align: right;
    padding-right: 13px;
}
.s-total {
    height: 48px;
    line-height: 46px;
    font-weight: 700;
}
.sort {
    position: absolute;
    width: 0;
    height: 0;
    border-left: 10px solid transparent;
    border-right: 10px solid transparent;
}
.sort.down {
    left: 9px;
    top: 40px;
    border-top: 10px solid #252423;
}
.sort.up {
    left: 11px;
    top: 42px;
    border-bottom: 10px solid #252423;
    border-left-width: 9px;
    border-right-width: 9px;
}

.original {
    left: 1269px;
    top: 0;
    width: 778px;
    font-size: 27px;
    letter-spacing: 0;
}
.o-title {
    height: 44px;
    line-height: 46px;
    font-size: 33px;
    color: #252423;
    white-space: nowrap;
    letter-spacing: 1.1px;
}
.o-row {
    display: grid;
    grid-template-columns: 50px 365px 363px;
    white-space: nowrap;
}
.o-head {
    box-sizing: border-box;
    height: 70px;
    line-height: 44px;
    padding-top: 9px;
    border-bottom: 3px solid #118dff;
}
.o-id-head {
    position: relative;
    padding-left: 12px;
}
.o-start {
    padding-left: 13px;
}
.o-end {
    padding-left: 11px;
}
.o-id {
    text-align: right;
    padding-right: 9px;
}
.o-body {
    box-sizing: border-box;
    height: 45px;
    line-height: 46px;
    border-bottom: 2px solid #e6e6e6;
}
.o-body.alt {
    background: #ececec;
}
.o-body.last {
    border-bottom: 0;
}

.chart {
    left: 137px;
    top: 527px;
    width: 2009px;
    height: 1011px;
    border: solid #e1dfdd;
    border-width: 2px 0 2px 2px;
    box-sizing: content-box;
    margin: -2px 0 0 -2px;
}
.c-title {
    height: 44px;
    line-height: 44px;
    padding-left: 10px;
    font-size: 33px;
    white-space: nowrap;
}
.legend {
    margin-top: 25px;
    height: 30px;
    padding-left: 14px;
    display: flex;
    align-items: center;
    font-size: 27px;
    letter-spacing: 0;
    color: #605e5c;
}
.dot {
    width: 20px;
    height: 21px;
    border-radius: 50%;
    margin-right: 5px;
}
.dot.light {
    background: #118dff;
}
.dot.dark {
    background: #12239e;
}
.leg-text {
    margin-right: 14px;
}
.plot {
    display: block;
    margin-top: 18px;
}
.tick {
    font-size: 25px;
    fill: #605e5c;
    font-family: var(--seg);
}
.axis-title {
    font-size: 28px;
    fill: #252423;
    font-family: var(--seg);
}
.axis-title.wide {
    letter-spacing: 0.5px;
}
.toolbar {
    position: absolute;
    top: 8px;
    right: 4px;
    display: flex;
    align-items: center;
    gap: 17px;
}
.toolbar .gap {
    margin-left: 11px;
}
.tool-dots {
    width: 4px;
    height: 4px;
    margin: 0 12px 0 9px;
    border-radius: 50%;
    background: #7f7d7b;
    box-shadow: -8px 0 #7f7d7b, 8px 0 #7f7d7b;
}
.handle {
    position: absolute;
    background: #a19f9d;
}
.corner {
    width: 14px;
    height: 14px;
    background: none;
    border: solid #a19f9d;
}
.tl {
    left: -2px;
    top: -4px;
    border-width: 5px 0 0 5px;
}
.bl {
    left: -2px;
    bottom: -1px;
    border-width: 0 0 5px 5px;
}
.br {
    right: 0;
    bottom: -1px;
    border-width: 0 5px 5px 0;
}
.hz {
    width: 18px;
    height: 5px;
}
.tm {
    left: 995px;
    top: -3px;
}
.tr {
    right: 0;
    top: -3px;
}
.bm {
    left: 995px;
    bottom: 0;
}
.vt {
    width: 5px;
    height: 18px;
    top: 496px;
}
.lm {
    left: -3px;
}
.rm {
    right: -3px;
}
.focus-line {
    position: absolute;
    left: 0;
    top: 1537px;
    width: 2146px;
    border-top: 3px dotted #5a5a5a;
}

.pane-head {
    box-sizing: border-box;
    height: 60px;
    padding-bottom: 2px;
    display: flex;
    align-items: center;
}
.pane-title {
    font-size: 24px;
    font-weight: 600;
    color: #252423;
}
.dbl {
    margin-left: auto;
}
.search {
    box-sizing: border-box;
    display: flex;
    align-items: center;
    background: #fff;
    border: 1px solid #a19f9d;
    border-radius: 3px;
    font-size: 20px;
    color: #484644;
}

.filters {
    box-sizing: border-box;
    width: 301px;
    flex: none;
    background: #fff;
    border-left: 2px solid #c8c6c4;
    overflow: hidden;
}
.filters .pane-head {
    padding-left: 16px;
    padding-right: 14px;
}
.funnel {
    margin-right: 10px;
}
.eye {
    margin-left: auto;
    margin-right: 27px;
}
.filters .dbl {
    margin-left: 0;
}
.f-search {
    width: 268px;
    height: 45px;
    margin: 8px 0 0 12px;
    padding-left: 15px;
    gap: 20px;
}
.f-search span {
    margin-bottom: 3px;
}
.f-rule {
    height: 1px;
    margin-top: 8px;
    background: #b3b0ad;
}
.f-section {
    height: 24px;
    line-height: 20px;
    margin: 40px 12px 13px 12px;
    display: flex;
    justify-content: space-between;
    font-size: 18px;
    color: #3b3a39;
}
.f-section.first {
    margin-top: 24px;
    margin-bottom: 13px;
}
.more {
    font-weight: 400;
    letter-spacing: 0.05em;
    margin-top: -2px;
    font-size: 20px;
}
.f-cards {
    display: flex;
    flex-direction: column;
    gap: 9px;
}
.f-card {
    box-sizing: border-box;
    width: 275px;
    height: 68px;
    margin-left: 12px;
    padding: 5px 0 0 11px;
    border: 1px solid #d2d0ce;
    border-radius: 3px;
    font-size: 18px;
    line-height: 27px;
    color: #3b3a39;
}
.f-add {
    box-sizing: border-box;
    width: 275px;
    height: 68px;
    margin-left: 12px;
    border: 1px solid #d2d0ce;
    border-radius: 3px;
    font-size: 18px;
    line-height: 66px;
    text-align: center;
    color: #3b3a39;
}

.viz {
    box-sizing: border-box;
    width: 271px;
    flex: none;
    background: #f3f2f1;
    border-left: 1px solid #e1dfdd;
    overflow: hidden;
}
.viz-head {
    padding-left: 12px;
    padding-right: 12px;
}
.build {
    height: 16px;
    line-height: 16px;
    padding-left: 12px;
    font-size: 17.5px;
    font-weight: 600;
}
.tabs {
    position: relative;
    margin-top: 10px;
    height: 68px;
    border-bottom: 1px solid #a19f9d;
    display: flex;
    padding-left: 12px;
    box-sizing: border-box;
}
.tab {
    width: 48px;
    height: 48px;
    flex: none;
}
.tab.on {
    background: #c8c6c4;
    border-radius: 3px;
}
.tab.brush {
    margin-left: 57px;
    padding-top: 2px;
}
.tab.scope {
    margin-left: 49px;
    padding-top: 2px;
}
.notch {
    position: absolute;
    left: 21px;
    bottom: -1px;
}
.viz-grid {
    margin: 13px 0 0 9px;
    display: grid;
    grid-template-columns: repeat(6, 42px);
    grid-auto-rows: 41.7px;
}
.viz-cell {
    display: flex;
    align-items: center;
    justify-content: center;
}
.viz-cell svg {
    overflow: visible;
}
.viz-cell.picked {
    box-sizing: border-box;
    width: 36px;
    height: 36px;
    margin: 3px 0 0 3px;
    background: #c8c6c4;
    border: 1px solid #979593;
}
.viz-rule {
    height: 1px;
    margin-top: 10px;
    background: #e1dfdd;
}
.bk-label {
    height: 24px;
    line-height: 20px;
    margin: 16px 0 9px 18px;
    font-size: 18px;
    color: #3b3a39;
}
.bk-first {
    margin-top: 13px;
}
.well {
    box-sizing: border-box;
    width: 255px;
    margin-left: 6px;
    border: 1px dashed #c8c6c4;
    background: #fff;
    border-radius: 2px;
    padding: 3px;
    font-size: 18px;
    color: #3b3a39;
    height: 107px;
}
.y-well {
    height: 87px;
    display: flex;
    flex-direction: column;
    gap: 3px;
}
.well.empty {
    height: 41px;
    line-height: 36px;
    padding: 0 0 0 15px;
}
.pill {
    box-sizing: border-box;
    background: #edebe9;
    border: 1px solid #c8c6c4;
    border-radius: 2px;
}
.pill.stack {
    height: 90px;
}
.pill.single {
    height: 33px;
    display: flex;
    align-items: center;
    padding: 0 4px 0 6px;
}
.pill-row {
    display: flex;
    align-items: center;
    padding: 0 4px 0 6px;
    height: 31px;
}
.pill-row.sub {
    padding-left: 18px;
    height: 29px;
}
.pill-row span {
    flex: 1;
    margin-bottom: 2px;
}
.pill.single span {
    flex: 1;
}
.x-chev {
    margin-right: 10px;
}
.x-x {
    margin-right: 1px;
}
.drill {
    font-weight: 600;
}
.toggle-row {
    display: flex;
    align-items: center;
    justify-content: space-between;
    width: 243px;
    margin: 6px 0 0 18px;
    height: 24px;
    font-size: 18px;
    color: #3b3a39;
}
.toggle-row.second {
    margin-top: 17px;
}
.toggle {
    box-sizing: border-box;
    width: 48px;
    height: 24px;
    border-radius: 12px;
    display: flex;
    align-items: center;
    font-size: 14px;
    gap: 3px;
    padding: 0 5px;
}
.toggle i {
    width: 12px;
    height: 12px;
    border-radius: 50%;
    flex: none;
}
.toggle em {
    font-style: normal;
}
.toggle.off {
    border: 1px solid #605e5c;
    background: #fff;
    color: #605e5c;
}
.toggle.off i {
    background: #605e5c;
}
.toggle.on {
    background: #605e5c;
    color: #fff;
    justify-content: space-between;
}
.toggle.on i {
    background: #fff;
}
.well.drill-well {
    height: 39px;
    margin-top: 15px;
    padding-left: 11px;
    line-height: 36px;
    white-space: nowrap;
}

.data {
    box-sizing: border-box;
    width: 234px;
    flex: none;
    background: #f3f2f1;
    border-left: 1px solid #e1dfdd;
    overflow: hidden;
}
.data .pane-head {
    padding-left: 12px;
}
.d-search {
    width: 300px;
    height: 38px;
    margin: 8px 0 0 7px;
    padding-left: 10px;
    gap: 9px;
}
.tree {
    margin-top: 15px;
    margin-left: 8px;
}
.t-row {
    height: 36px;
    display: flex;
    align-items: center;
    font-size: 18px;
    color: #484644;
    white-space: nowrap;
}
.t-chev {
    flex: none;
}
.k-top {
    padding-left: 3px;
}
.k-top .t-chev {
    margin-right: 5px;
}
.k-top .t-icon {
    margin-right: 6px;
}
.k-hier {
    padding-left: 25px;
    background: #c8c6c4;
}
.k-hier .t-chev {
    margin-right: 8px;
}
.k-hier .check {
    margin-right: 7px;
}
.k-hier .t-icon {
    margin-right: 9px;
}
.k-nested {
    padding-left: 72px;
}
.k-nested .check {
    margin-right: 10px;
}
.k-nested .t-icon {
    margin-right: 5px;
}
.k-field {
    padding-left: 49px;
}
.k-field .check {
    margin-right: 39px;
}
.check {
    box-sizing: border-box;
    width: 18px;
    height: 18px;
    flex: none;
    border: 1px solid #a19f9d;
    border-radius: 3px;
    background: #fff;
}
.check.on {
    border: 0;
    background: #117865;
}
.check svg {
    display: block;
}
.t-icon {
    position: relative;
    width: 24px;
    height: 26px;
    flex: none;
}
.t-icon > svg {
    display: block;
}
.badge {
    position: absolute;
    left: 12px;
    top: 11px;
    width: 16px;
    height: 16px;
}
.badge svg {
    display: block;
}
</style>
